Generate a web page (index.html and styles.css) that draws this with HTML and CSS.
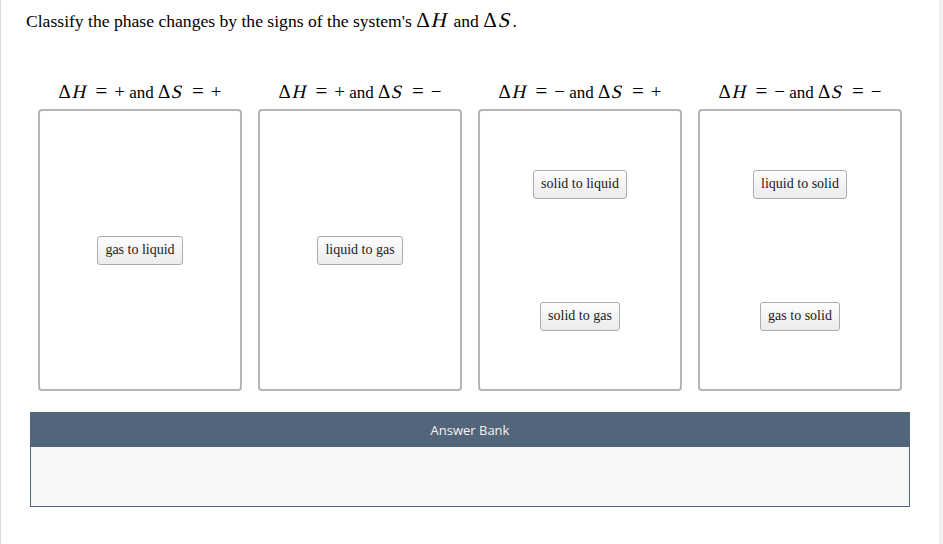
FILE: index.html
```html
<!DOCTYPE html>
<html>
<head>
<meta charset="utf-8">
<link rel="stylesheet" href="styles.css">
</head>
<body>
<div class="page">
  <p class="title">Classify the phase changes by the signs of the system's <span class="m"><span class="d">Δ</span><i>H</i></span> and <span class="m"><span class="d">Δ</span><i>S</i></span>.</p>
  <div class="columns">
    <div class="col">
      <div class="head"><span class="m"><span class="d">Δ</span><i>H</i><span class="op">=</span>+</span> and <span class="m"><span class="d">Δ</span><i>S</i><span class="op">=</span>+</span></div>
      <div class="box">
        <span class="chip">gas to liquid</span>
      </div>
    </div>
    <div class="col">
      <div class="head"><span class="m"><span class="d">Δ</span><i>H</i><span class="op">=</span>+</span> and <span class="m"><span class="d">Δ</span><i>S</i><span class="op">=</span>−</span></div>
      <div class="box">
        <span class="chip">liquid to gas</span>
      </div>
    </div>
    <div class="col">
      <div class="head"><span class="m"><span class="d">Δ</span><i>H</i><span class="op">=</span>−</span> and <span class="m"><span class="d">Δ</span><i>S</i><span class="op">=</span>+</span></div>
      <div class="box">
        <span class="chip">solid to liquid</span>
        <span class="chip">solid to gas</span>
      </div>
    </div>
    <div class="col">
      <div class="head"><span class="m"><span class="d">Δ</span><i>H</i><span class="op">=</span>−</span> and <span class="m"><span class="d">Δ</span><i>S</i><span class="op">=</span>−</span></div>
      <div class="box">
        <span class="chip">liquid to solid</span>
        <span class="chip">gas to solid</span>
      </div>
    </div>
  </div>
  <div class="bank">
    <div class="bank-head">Answer Bank</div>
    <div class="bank-body"></div>
  </div>
</div>
</body>
</html>
```

FILE: styles.css
```css
html, body {
  margin: 0;
  padding: 0;
}
body {
  background: #efefef;
  font-family: "Liberation Serif", "Times New Roman", serif;
  color: #000;
}
.page {
  width: 939px;
  height: 544px;
  box-sizing: border-box;
  border-left: 1px solid #dcdcdc;
  background: #fff;
  overflow: hidden;
}
.title {
  margin: 0;
  padding: 10px 0 0 25px;
  height: 20px;
  font-size: 17.6px;
  line-height: 20px;
}
.title .m {
  font-size: 1.2em;
}
.m {
  font-family: "Liberation Serif", "Times New Roman", serif;
  font-size: 1.12em;
  line-height: 1;
}
.d {
  font-family: "Liberation Serif", "Times New Roman", serif;
}
.m i {
  display: inline-block;
  font-family: "Liberation Serif", "Times New Roman", serif;
  font-style: normal;
  transform: skewX(-13deg);
  padding-left: 2px;
  padding-right: 2px;
}
.columns {
  display: flex;
  gap: 16px;
  margin: 51px 0 0 37px;
}
.col {
  width: 204px;
  display: flex;
  flex-direction: column;
  gap: 8px;
}
.head {
  height: 20px;
  text-align: center;
  font-size: 17px;
  line-height: 20px;
}
.op {
  padding: 0 7px;
  font-size: 1.1em;
}
.box {
  height: 282px;
  box-sizing: border-box;
  border: 2px solid #b4b4b4;
  border-radius: 4px;
  display: flex;
  flex-direction: column;
  align-items: center;
  justify-content: center;
  gap: 103px;
}
.chip {
  display: flex;
  align-items: center;
  height: 29px;
  box-sizing: border-box;
  padding: 0 7px;
  border: 1px solid #acacac;
  border-radius: 3px;
  background: linear-gradient(#fdfdfd, #ebebeb);
  font-size: 14px;
  color: #1a1a1a;
}
.bank {
  margin: 21px 0 0 29px;
  width: 880px;
}
.bank-head {
  height: 35px;
  background: #52657b;
  color: #f2f4f7;
  font-family: "Open Sans", "Liberation Sans", sans-serif;
  font-size: 13px;
  display: flex;
  align-items: center;
  justify-content: center;
}
.bank-body {
  height: 60px;
  box-sizing: border-box;
  background: #f7f7f7;
  border: 1px solid #52657b;
  border-top: none;
}
```
